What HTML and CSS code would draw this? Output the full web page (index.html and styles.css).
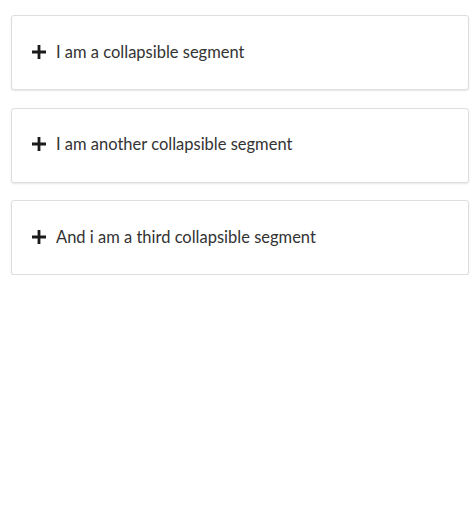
FILE: index.html
```html
<!DOCTYPE html>
<html lang="en">
<head>
  <meta charset="UTF-8">
  <meta name="viewport" content="width=device-width, initial-scale=1.0">
  <title>Collapsible segments</title>
  <link rel="stylesheet" href="styles.css">
</head>
<body>
<div class="segments">
  <div class="segment">
    <svg class="plus" viewBox="0 0 14 14"><path d="M5.6 0h2.8v5.6H14v2.8H8.4V14H5.6V8.4H0V5.6h5.6z"/></svg>
    <span class="title">I am a collapsible segment</span>
  </div>
  <div class="segment">
    <svg class="plus" viewBox="0 0 14 14"><path d="M5.6 0h2.8v5.6H14v2.8H8.4V14H5.6V8.4H0V5.6h5.6z"/></svg>
    <span class="title">I am another collapsible segment</span>
  </div>
  <div class="segment">
    <svg class="plus" viewBox="0 0 14 14"><path d="M5.6 0h2.8v5.6H14v2.8H8.4V14H5.6V8.4H0V5.6h5.6z"/></svg>
    <span class="title">And i am a third collapsible segment</span>
  </div>
</div>
</body>
</html>
```

FILE: styles.css
```css
body {
  margin: 0;
  padding: 15px 5px 0 11px;
  font-family: Lato, "Liberation Sans", sans-serif;
  background-color: #fff;
  color: #333;
}

.segments {
  display: flex;
  flex-direction: column;
  gap: 17.5px;
}

.segment {
  display: flex;
  align-items: center;
  padding: 0 0 2px 20px;
  height: 71px;
  border: 1px solid #dedede;
  border-radius: 3px;
  box-shadow: 0 1px 2px rgba(0, 0, 0, 0.1);
  background-color: #fff;
}

.plus {
  width: 14px;
  height: 14px;
  fill: #1b1b1b;
  margin-right: 10px;
}

.title {
  font-size: 16.5px;
}
```
